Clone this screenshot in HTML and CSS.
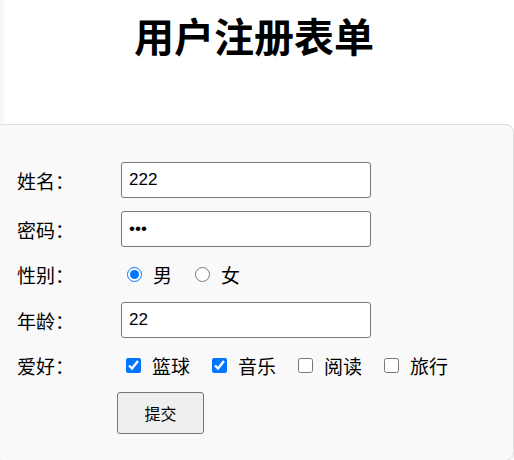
FILE: index.html
```html
<!DOCTYPE html>
<html lang="zh">
<head>
    <meta charset="utf-8">
    <title>用户注册表单</title>
    <link rel="stylesheet" href="styles.css">
</head>
<body>
<div class="page">
    <h1 class="title">用户注册表单</h1>
    <form class="form">
        <div class="row">
            <label class="label" for="name">姓名：</label>
            <input class="field" type="text" id="name" value="222">
        </div>
        <div class="row">
            <label class="label" for="pwd">密码：</label>
            <input class="field" type="password" id="pwd" value="123">
        </div>
        <div class="row choice">
            <span class="label">性别：</span>
            <div class="options">
                <label class="option"><input type="radio" name="sex" checked><span>男</span></label>
                <label class="option"><input type="radio" name="sex"><span>女</span></label>
            </div>
        </div>
        <div class="row">
            <label class="label" for="age">年龄：</label>
            <input class="field" type="number" id="age" value="22">
        </div>
        <div class="row choice">
            <span class="label">爱好：</span>
            <div class="options">
                <label class="option"><input type="checkbox" checked><span>篮球</span></label>
                <label class="option"><input type="checkbox" checked><span>音乐</span></label>
                <label class="option"><input type="checkbox"><span>阅读</span></label>
                <label class="option"><input type="checkbox"><span>旅行</span></label>
            </div>
        </div>
        <div class="row actions">
            <button class="submit" type="button">提交</button>
        </div>
    </form>
</div>
</body>
</html>
```

FILE: styles.css
```css
*,
*:before,
*:after {
    margin: 0;
    padding: 0;
    box-sizing: border-box;
}

html {
    background: linear-gradient(to right, rgba(0, 0, 0, 0.045), rgba(0, 0, 0, 0) 6px) #ffffff;
}

body {
    font-family: "Noto Sans CJK SC", "Noto Sans", sans-serif;
    color: #000000;
    overflow: hidden;
}

.page {
    margin-left: -6px;
}

.title {
    margin-top: 10px;
    font-size: 40px;
    line-height: 50px;
    font-weight: 700;
    text-align: center;
}

.form {
    margin-top: 64px;
    height: 337px;
    padding: 37px 20px 0 22px;
    background-color: #f9f9f9;
    border: 1px solid #dddddd;
    border-radius: 8px;
}

.row {
    display: flex;
    align-items: center;
    height: 36px;
    margin-bottom: 13px;
}

.row.choice {
    height: 29px;
}

.row.actions {
    height: 42px;
    margin-top: -1px;
    padding-left: 100px;
}

.label {
    width: 104px;
    flex: none;
    font-size: 19px;
}

.field {
    width: 250px;
    height: 36px;
    padding: 0 7px;
    border: 1px solid #767676;
    border-radius: 3px;
    background-color: #ffffff;
    font-family: "Liberation Sans", Arial, sans-serif;
    font-size: 17px;
    color: #000000;
}

.field[type="number"] {
    appearance: textfield;
}

.options {
    display: flex;
    align-items: center;
}

.option {
    display: flex;
    align-items: center;
    gap: 11px;
    margin-right: 17px;
    font-size: 19px;
}

.option input {
    width: 15px;
    height: 15px;
    margin-left: 5px;
    accent-color: #0075ff;
}

.option input[type="radio"] {
    margin-left: 6px;
}

.submit {
    width: 87px;
    height: 42px;
    border: 1px solid #767676;
    border-radius: 3px;
    background-color: #efefef;
    font-family: "Noto Sans CJK SC", sans-serif;
    font-size: 16px;
    color: #000000;
}
```
